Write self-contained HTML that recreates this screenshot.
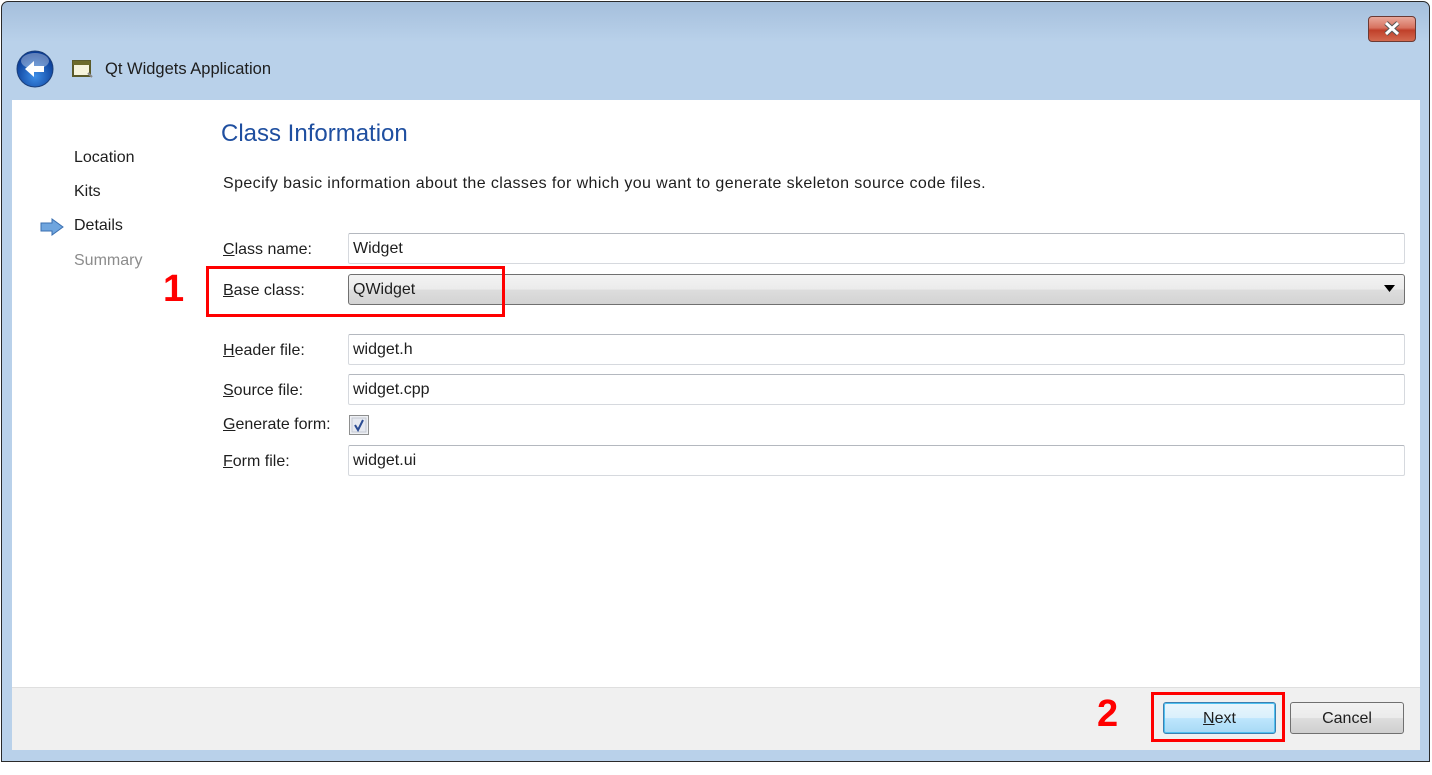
<!DOCTYPE html>
<html><head><meta charset="utf-8"><style>
*{margin:0;padding:0;box-sizing:border-box}
body{width:1432px;height:775px;background:#fff;position:relative;overflow:hidden;font-family:"Liberation Sans",sans-serif;font-size:16px;color:#1e1e1e}
.win{position:absolute;left:1px;top:1px;width:1429px;height:761px;border:1px solid #2a2a2a;border-radius:7px 7px 0 0;background:linear-gradient(#a5bfdc 0,#b9d1ea 40px,#b9d1ea);}
.content{position:absolute;left:12px;top:100px;width:1408px;height:587px;background:#fff}
.footer{position:absolute;left:12px;top:687px;width:1408px;height:63px;background:#f0f0f0;border-top:1px solid #dfdfdf}
.abs{position:absolute;white-space:nowrap}
.field{position:absolute;left:348px;width:1057px;height:31px;border:1px solid #d6d9de;border-top-color:#b4b8bf;border-radius:2px;background:#fff;padding:6px 4px;font-size:16px}
u{text-decoration:underline}
.btn{position:absolute;top:702px;height:32px;border:1px solid #707070;border-radius:3px;background:linear-gradient(#f2f2f2,#ebebeb 50%,#dddddd 51%,#cfcfcf);text-align:center;line-height:32px;font-size:16px}
.red{position:absolute;border:3px solid #f00}
.num{position:absolute;color:#f00;font-weight:bold;font-size:38px}
</style></head><body>
<div class="win"></div>
<div class="abs" style="left:1368px;top:16px;width:48px;height:26px;border:1px solid #6b3a34;border-radius:4px;background:linear-gradient(#e9a99c,#d7725f 45%,#c0402a 55%,#d36a50);"></div>
<svg class="abs" style="left:1383px;top:20px" width="18" height="17" viewBox="0 0 18 17"><path d="M3 3 L15 14 M15 3 L3 14" stroke="#555" stroke-width="5"/><path d="M3 3 L15 14 M15 3 L3 14" stroke="#fff" stroke-width="3"/></svg>
<svg class="abs" style="left:16px;top:50px" width="38" height="38" viewBox="0 0 38 38"><defs><radialGradient id="g" cx="50%" cy="70%" r="60%"><stop offset="0" stop-color="#3d8ee8"/><stop offset="1" stop-color="#0a3c96"/></radialGradient></defs><circle cx="19" cy="19" r="18" fill="url(#g)" stroke="#1b3f7a"/><ellipse cx="19" cy="11" rx="14" ry="8" fill="#fff" opacity=".35"/><path d="M9 19 L18 11 L18 16 L28 16 L28 22 L18 22 L18 27 Z" fill="#fff"/></svg>
<svg class="abs" style="left:72px;top:60px" width="22" height="19" viewBox="0 0 22 19"><rect x="1" y="1" width="17" height="15" fill="#f6f4dc" stroke="#5a5a2a" stroke-width="2"/><rect x="1" y="1" width="17" height="4" fill="#6d6b2b"/><path d="M16 13 l4 4" stroke="#888" stroke-width="2"/></svg>
<div class="abs" style="left:105px;top:60px;font-size:16.5px;color:#1e1e1e">Qt Widgets Application</div>
<div class="content"></div>
<div class="footer"></div>
<div class="abs" style="left:74px;top:149px">Location</div>
<div class="abs" style="left:74px;top:183px">Kits</div>
<svg class="abs" style="left:40px;top:218px" width="25" height="18" viewBox="0 0 25 18"><path d="M1 5 H12 V1 L23 9 L12 17 V13 H1 Z" fill="#6fa5de" stroke="#3a6fb0"/></svg>
<div class="abs" style="left:74px;top:217px">Details</div>
<div class="abs" style="left:74px;top:252px;color:#8c8c8c">Summary</div>
<div class="abs" style="left:221px;top:120px;font-size:24px;color:#1f4fa0">Class Information</div>
<div class="abs" style="left:223px;top:175px;letter-spacing:0.4px">Specify basic information about the classes for which you want to generate skeleton source code files.</div>
<div class="abs" style="left:223px;top:241px"><u>C</u>lass name:</div>
<div class="field" style="top:233px">Widget</div>
<div class="abs" style="left:223px;top:282px"><u>B</u>ase class:</div>
<div class="field" style="top:274px;height:31px;border:1px solid #707070;border-radius:3px;background:linear-gradient(#f3f3f3,#ebebeb 50%,#dddddd 51%,#d3d3d3)">QWidget</div>
<svg class="abs" style="left:1384px;top:285px" width="11" height="7"><path d="M0 0 H11 L5.5 7Z" fill="#000"/></svg>
<div class="abs" style="left:223px;top:342px"><u>H</u>eader file:</div>
<div class="field" style="top:334px">widget.h</div>
<div class="abs" style="left:223px;top:382px"><u>S</u>ource file:</div>
<div class="field" style="top:374px">widget.cpp</div>
<div class="abs" style="left:223px;top:416px"><u>G</u>enerate form:</div>
<svg class="abs" style="left:349px;top:415px" width="20" height="20" viewBox="0 0 20 20"><rect x="0.5" y="0.5" width="19" height="19" fill="#eef0f4" stroke="#8e8f8f"/><rect x="3" y="3" width="14" height="14" fill="#e6e9f0" stroke="#c4c9d2"/><path d="M6 10 L9 15 L14 5" fill="none" stroke="#2b4c93" stroke-width="2"/></svg>
<div class="abs" style="left:223px;top:453px"><u>F</u>orm file:</div>
<div class="field" style="top:445px">widget.ui</div>
<div class="btn" style="left:1163px;width:113px;border-color:#3c7fb1;box-shadow:inset 0 0 0 1px #4fc1f0;background:linear-gradient(#eaf6fd,#d9f0fc 50%,#bee6fd 51%,#a7d9f5)"><u>N</u>ext</div>
<div class="btn" style="left:1290px;width:114px">Cancel</div>
<div class="red" style="left:206px;top:266px;width:299px;height:51px"></div>
<div class="num" style="left:163px;top:268px">1</div>
<div class="red" style="left:1151px;top:692px;width:134px;height:50px"></div>
<div class="num" style="left:1097px;top:693px">2</div>
</body></html>
